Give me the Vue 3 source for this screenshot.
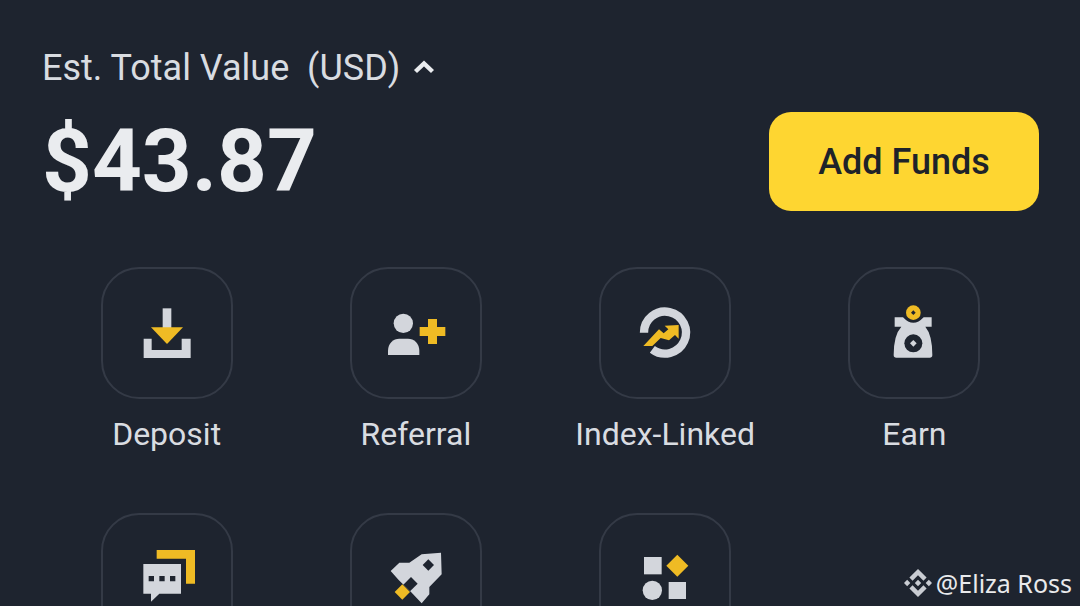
<template>
  <div class="page">
    <div class="label-row">
      <span class="label">Est. Total Value&nbsp; (USD)</span>
      <svg class="chevron" viewBox="0 0 22 14" width="22" height="14">
        <path d="M2.5 11.5 L11 3.5 L19.5 11.5" fill="none" stroke="#eaecef" stroke-width="4.4" />
      </svg>
    </div>
    <div class="balance-row">
      <div class="amount">$43.87</div>
      <button class="add-funds">Add Funds</button>
    </div>
    <div class="grid">
      <div class="item" v-for="item in items" :key="item.id">
        <div class="tile">
          <svg viewBox="36 27 384 384" width="128" height="128">
            <template v-if="item.id === 'deposit'">
              <path class="light" d="M215 145H241V205H215Z" />
              <path class="light" d="M158 236H182V270H272V236H299V294H158Z" />
              <path class="gold" d="M180 202H276L228 252Z" />
            </template>
            <template v-else-if="item.id === 'referral'">
              <circle class="light" cx="190" cy="190" r="29" />
              <path class="light" d="M144 285V272C144 250 160 236 178 236H204C222 236 238 250 238 272V285Z" />
              <path class="gold" d="M264 177H291V201H316V228H291V252H264V228H239V201H264Z" />
            </template>
            <template v-else-if="item.id === 'index'">
              <path d="M165 218A63 63 0 1 1 190 268" fill="none" stroke="#d3d6dc" stroke-width="25" />
              <path class="gold" d="M163 258L210 208L224 220L238 208L227 197L269 195V236L258 225L240 241L215 234L190 258Z" />
            </template>
            <template v-else-if="item.id === 'earn'">
              <path class="light" d="M170 172H195Q226 205 257 172H281V200H262Q283 225 283 285Q283 293 275 293H175Q167 293 167 285Q167 225 190 200H170Z" />
              <circle class="dark" cx="226" cy="250" r="27" />
              <path class="light" d="M226 240L236 250L226 260L216 250Z" />
              <circle class="gold" cx="226" cy="158" r="22" />
              <path class="dark" d="M226 151L233 158L226 165L219 158Z" />
            </template>
            <template v-else-if="item.id === 'chat'">
              <path class="gold" d="M197 132H312V233H285V158H197Z" />
              <path class="light" d="M157 174H270V263H205L180 287V263H157Z" />
              <path class="dark" d="M173 210H189V226H173ZM205 210H221V226H205ZM237 210H253V226H237Z" />
            </template>
            <template v-else-if="item.id === 'rocket'">
              <path class="light" d="M303 140L305 205L268 243V265L245 292L213 258L176 222L152 195L178 170H208L245 145Z" />
              <path class="dark" d="M265 160L282 177L265 194L248 177Z" />
              <path class="dark" d="M213 213L233 233L210 256L190 236Z" />
              <path class="gold" d="M187 235L210 258L187 281L164 258Z" />
            </template>
            <template v-else>
              <path class="light" d="M165 153H218V205H165Z" />
              <path class="gold" d="M265 146L298 179L265 212L232 179Z" />
              <circle class="light" cx="190" cy="253" r="29" />
              <path class="light" d="M239 228H291V279H239Z" />
            </template>
          </svg>
        </div>
        <div class="item-name">{{ item.name }}</div>
      </div>
    </div>
    <div class="watermark">
      <svg viewBox="0 0 126.61 126.61" width="28" height="28">
        <path fill="#c9ccd2" d="M38.73 53.2l24.59-24.58 24.6 24.6 14.3-14.31L63.32 0 24.42 38.9zM0 63.31l14.3-14.31 14.31 14.31-14.31 14.3zM38.73 73.41l24.59 24.59 24.6-24.6 14.31 14.29-38.9 38.91-38.91-38.88zM98 63.31l14.3-14.31 14.31 14.3-14.31 14.32zM77.83 63.3L63.32 48.78 52.59 59.51l-1.24 1.23-2.54 2.54 14.51 14.5 14.51-14.47z" />
      </svg>
      <span>@Eliza Ross</span>
    </div>
  </div>
</template>

<script setup>
const items = [
  { id: 'deposit', name: 'Deposit' },
  { id: 'referral', name: 'Referral' },
  { id: 'index', name: 'Index-Linked' },
  { id: 'earn', name: 'Earn' },
  { id: 'chat', name: '' },
  { id: 'rocket', name: '' },
  { id: 'shapes', name: '' }
]
</script>

<style>
html, body {
  margin: 0;
  background: #1e242f;
}
</style>

<style scoped>
.page {
  position: relative;
  width: 1080px;
  height: 606px;
  overflow: hidden;
  box-sizing: border-box;
  padding: 44px 41px 0 42px;
  background: #1e242f;
  font-family: Roboto, "Noto Sans", sans-serif;
  color: #eaecef;
}
.label-row {
  display: flex;
  align-items: center;
  gap: 13px;
  height: 48px;
}
.label {
  font-size: 36px;
  line-height: 48px;
  color: #d9dce1;
}
.chevron {
  margin-top: -3px;
}
.balance-row {
  display: flex;
  justify-content: space-between;
  align-items: center;
  margin-top: 20px;
  height: 99px;
}
.amount {
  font-size: 87px;
  font-weight: 700;
  line-height: 99px;
  color: #eaecef;
}
.add-funds {
  width: 270px;
  height: 99px;
  border: none;
  border-radius: 22px;
  background: #fed631;
  color: #1e2329;
  font-family: inherit;
  font-size: 36px;
  font-weight: 500;
}
.grid {
  display: grid;
  grid-template-columns: repeat(4, 1fr);
  grid-auto-rows: 246px;
  margin-top: 56px;
}
.item {
  display: flex;
  flex-direction: column;
  align-items: center;
}
.tile {
  display: flex;
  box-sizing: border-box;
  width: 132px;
  height: 132px;
  border: 2px solid #343a46;
  border-radius: 38px;
}
.item-name {
  margin-top: 13px;
  font-size: 32px;
  line-height: 44px;
  color: #d9dce1;
}
.light {
  fill: #d3d6dc;
}
.gold {
  fill: #efbb24;
}
.dark {
  fill: #1e242f;
}
.watermark {
  position: absolute;
  right: 8px;
  bottom: 8px;
  display: flex;
  align-items: center;
  gap: 4px;
  font-family: "Noto Sans", sans-serif;
  font-size: 25px;
  line-height: 30px;
  color: #e9eaec;
}
</style>
